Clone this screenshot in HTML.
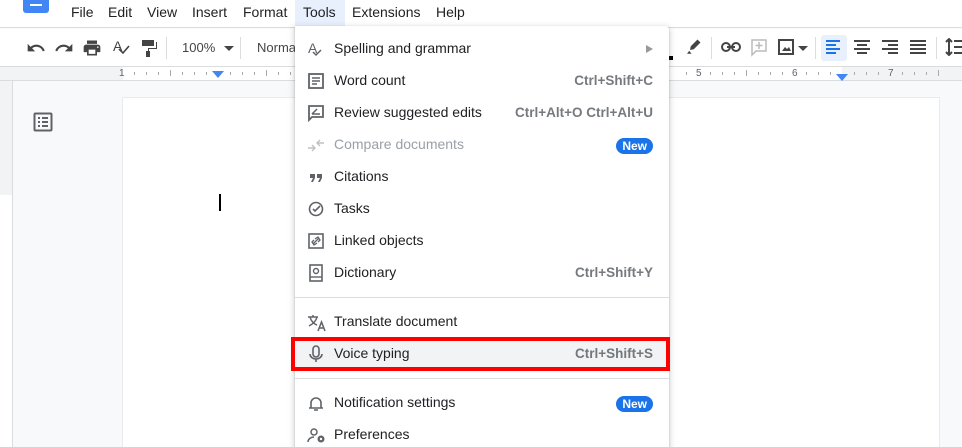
<!DOCTYPE html>
<html><head><style>
*{margin:0;padding:0;box-sizing:border-box}
html,body{width:962px;height:447px;overflow:hidden}
body{background:#f8f9fa;font-family:"Liberation Sans",Arial,sans-serif;position:relative;color:#3c4043}
.abs{position:absolute}
.menubar{left:0;top:0;width:962px;height:28px;background:#fff;border-bottom:1px solid #dadce0}
.mi{position:absolute;top:4px;font-size:14px;color:#202124}
.toolbar{left:0;top:29px;width:962px;height:38px;background:#fff;border-bottom:1px solid #dadce0}
.ruler{left:0;top:67px;width:962px;height:14px;background:#fff;border-bottom:1px solid #dadce0}
.page{left:123px;top:98px;width:816px;height:360px;background:#fff;box-shadow:0 0 0 1px #e8eaed}
.menu{left:295px;top:26px;width:374px;height:430px;background:#fff;border-radius:0 4px 4px 4px;box-shadow:0 2px 6px 2px rgba(60,64,67,.15),0 1px 2px rgba(60,64,67,.3)}
.it{position:absolute;left:0;width:374px;height:32px;font-size:14px;color:#202124}
.it .t{position:absolute;left:39px;top:8px}
.it .k{position:absolute;right:16px;top:9px;color:#5f6368;font-size:13.5px;font-weight:bold;opacity:.85}
.it svg{position:absolute;left:12px;top:8px}
.new{position:absolute;right:16px;top:10px;background:#1a73e8;color:#fff;font-size:12px;font-weight:bold;border-radius:8px;padding:1px 6px;height:16px;line-height:14px}
.div{position:absolute;left:0;width:374px;height:1px;background:#dadce0}
.ti{position:absolute;top:9px}
.tk{position:absolute;top:5px;width:1px;height:3px;background:#aaa}
</style></head><body>
<div class="abs menubar">
 <div class="abs" style="left:23px;top:-4px;width:26px;height:17px;background:#4285f4;border-radius:3px"><div style="position:absolute;left:7px;top:8px;width:12px;height:2px;background:#fff"></div></div>
 <span class="mi" style="left:71px">File</span>
 <span class="mi" style="left:108px">Edit</span>
 <span class="mi" style="left:147px">View</span>
 <span class="mi" style="left:192px">Insert</span>
 <span class="mi" style="left:243px">Format</span>
 <div class="abs" style="left:295px;top:0;width:50px;height:26px;background:#e8f0fe"></div>
 <span class="mi" style="left:303px">Tools</span>
 <span class="mi" style="left:352px">Extensions</span>
 <span class="mi" style="left:436px">Help</span>
</div>
<div class="abs toolbar">
 <svg class="ti" style="left:26px" width="20" height="20" viewBox="0 0 24 24"><path d="M12.5 8c-2.65 0-5.05 1-6.9 2.6L2 7v9h9l-3.620-3.62c1.39-1.16 3.16-1.88 5.12-1.88 3.54 0 6.55 2.31 7.6 5.5l2.37-.78C21.08 11.03 17.15 8 12.5 8z" fill="#444"/></svg>
 <svg class="ti" style="left:54px" width="20" height="20" viewBox="0 0 24 24"><path d="M18.4 10.6C16.55 9 14.15 8 11.5 8c-4.65 0-8.58 3.03-9.960 7.22L3.9 16c1.05-3.19 4.05-5.5 7.6-5.5 1.95 0 3.73.72 5.12 1.88L13 16h9V7l-3.6 3.6z" fill="#444"/></svg>
 <svg class="ti" style="left:82px" width="20" height="20" viewBox="0 0 24 24"><path d="M19 8H5c-1.66 0-3 1.34-3 3v6h4v4h12v-4h4v-6c0-1.66-1.34-3-3-3zm-3 11H8v-5h8v5zm3-7c-.55 0-1-.45-1-1s.45-1 1-1 1 .45 1 1-.45 1-1 1zm-1-9H6v4h12V3z" fill="#444"/></svg>
 <span class="abs" style="left:113px;top:9px;font-size:14px;color:#444">A</span><svg class="abs" style="left:117px;top:16px" width="14" height="10"><path d="M2 4l4 4 6-7" stroke="#444" stroke-width="1.6" fill="none"/></svg>
 <svg class="ti" style="left:140px" width="18" height="20" viewBox="0 0 18 20"><path d="M2 2h12v6H2zM14 4h2v6H8v3H6v6h4v-6H9V11h8V4" fill="#444"/></svg>
 <div class="abs" style="left:166px;top:8px;width:1px;height:22px;background:#dadce0"></div>
 <span class="abs" style="left:182px;top:11px;font-size:13px;color:#444">100%</span>
 <div class="abs" style="left:224px;top:17px;border:5px solid transparent;border-top-color:#444;border-bottom:0"></div>
 <div class="abs" style="left:240px;top:8px;width:1px;height:22px;background:#dadce0"></div>
 <span class="abs" style="left:257px;top:11px;font-size:13px;color:#444">Normal</span>
 <div class="abs" style="left:669px;top:27px;width:4px;height:4px;background:#000"></div>
 <svg class="ti" style="left:684px" width="18" height="18" viewBox="0 0 24 24"><path d="M18 2l4 4-9 9-5 1 1-5z M7 17l-3 4h6" fill="#444"/></svg>
 <div class="abs" style="left:711px;top:8px;width:1px;height:22px;background:#dadce0"></div>
 <svg class="ti" style="left:720px;top:10px" width="22" height="16" viewBox="0 0 22 16"><rect x="2" y="4" width="8" height="8" rx="4" fill="none" stroke="#444" stroke-width="2"/><rect x="12" y="4" width="8" height="8" rx="4" fill="none" stroke="#444" stroke-width="2"/><path d="M7 8h8" stroke="#444" stroke-width="2"/></svg>
 <svg class="ti" style="left:750px" width="18" height="20" viewBox="0 0 18 20"><path d="M2 2h14v11H6l-4 4z" fill="none" stroke="#bbb" stroke-width="1.5"/><path d="M9 4v7M5.5 7.5h7" stroke="#bbb" stroke-width="1.5"/></svg>
 <svg class="ti" style="left:777px" width="18" height="18" viewBox="0 0 18 18"><rect x="2" y="2" width="14" height="14" fill="none" stroke="#444" stroke-width="2"/><path d="M5 13l3-4 2 2 2-2 2 4z" fill="#444"/></svg>
 <div class="abs" style="left:798px;top:17px;border:5px solid transparent;border-top-color:#444;border-bottom:0"></div>
 <div class="abs" style="left:815px;top:8px;width:1px;height:22px;background:#dadce0"></div>
 <div class="abs" style="left:821px;top:6px;width:26px;height:26px;background:#e8f0fe;border-radius:3px"></div>
 <svg class="ti" style="left:825px" width="18" height="18"><path d="M1 3h14M1 7h10M1 11h14M1 15h10" stroke="#1a73e8" stroke-width="2"/></svg>
 <svg class="ti" style="left:853px" width="18" height="18"><path d="M1 3h16M4 7h10M1 11h16M4 15h10" stroke="#444" stroke-width="2"/></svg>
 <svg class="ti" style="left:881px" width="18" height="18"><path d="M1 3h16M7 7h10M1 11h16M7 15h10" stroke="#444" stroke-width="2"/></svg>
 <svg class="ti" style="left:909px" width="18" height="18"><path d="M1 3h16M1 7h16M1 11h16M1 15h16" stroke="#444" stroke-width="2"/></svg>
 <div class="abs" style="left:936px;top:8px;width:1px;height:22px;background:#dadce0"></div>
 <svg class="ti" style="left:945px" width="17" height="18"><path d="M4 1v16M1 4l3-3 3 3M1 14l3 3 3-3M9 3h8M9 9h8M9 15h8" stroke="#444" stroke-width="2" fill="none"/></svg>
</div>
<div class="abs ruler">
 <div class="abs" style="left:0;top:0;width:123px;height:13px;background:#f1f3f4"></div>
 <div class="abs" style="left:842px;top:0;width:120px;height:13px;background:#f1f3f4"></div>
 <span class="abs" style="left:119px;top:1px;font-size:10px;color:#5f6368">1</span>
 <div class="tk" style="left:134px"></div><div class="tk" style="left:146px"></div><div class="tk" style="left:158px"></div><div class="tk" style="left:170px;top:3px;height:6px"></div><div class="tk" style="left:182px"></div><div class="tk" style="left:194px"></div><div class="tk" style="left:206px"></div><div class="tk" style="left:230px"></div><div class="tk" style="left:242px"></div><div class="tk" style="left:254px"></div><div class="tk" style="left:266px;top:3px;height:6px"></div><div class="tk" style="left:278px"></div><div class="tk" style="left:290px"></div>
 <span class="abs" style="left:696px;top:1px;font-size:10px;color:#5f6368">5</span>
 <div class="tk" style="left:686px"></div><div class="tk" style="left:710px"></div><div class="tk" style="left:722px"></div><div class="tk" style="left:734px"></div><div class="tk" style="left:746px;top:3px;height:6px"></div><div class="tk" style="left:758px"></div><div class="tk" style="left:770px"></div><div class="tk" style="left:782px"></div>
 <span class="abs" style="left:792px;top:1px;font-size:10px;color:#5f6368">6</span>
 <div class="tk" style="left:806px"></div><div class="tk" style="left:818px"></div><div class="tk" style="left:830px"></div><div class="tk" style="left:854px"></div><div class="tk" style="left:866px"></div><div class="tk" style="left:878px"></div><div class="tk" style="left:902px"></div><div class="tk" style="left:914px"></div><div class="tk" style="left:926px"></div><div class="tk" style="left:938px;top:3px;height:6px"></div>
 <span class="abs" style="left:888px;top:1px;font-size:10px;color:#5f6368">7</span>
 <div class="abs" style="left:212px;top:4px;border:6px solid transparent;border-top:7px solid #4285f4;border-bottom:0"></div>
 <div class="abs" style="left:836px;top:7px;border:6px solid transparent;border-top:7px solid #4285f4;border-bottom:0"></div>
</div>
<div class="abs" style="left:0;top:81px;width:13px;height:366px;background:#fff;border-right:1px solid #dadce0"></div>
<div class="abs" style="left:0;top:81px;width:13px;height:114px;background:#f1f3f4;border-right:1px solid #dadce0"></div>
<svg class="abs" style="left:33px;top:112px" width="20" height="20"><rect x="1.5" y="1.5" width="17" height="17" rx="1" fill="none" stroke="#5f6368" stroke-width="2"/><path d="M5 6h2M9 6h6M5 10h2M9 10h6M5 14h2M9 14h6" stroke="#5f6368" stroke-width="2"/></svg>
<div class="abs page"></div>
<div class="abs" style="left:219px;top:194px;width:2px;height:17px;background:#000"></div>
<div class="abs menu">
 <div class="it" style="top:6px"><span class="abs" style="left:13px;top:8px;font-size:14px;color:#5f6368">A</span><svg style="left:17px;top:17px" width="12" height="8"><path d="M1 3l3 3 5-5" stroke="#5f6368" stroke-width="1.5" fill="none"/></svg><span class="t">Spelling and grammar</span><div class="abs" style="right:16px;top:13px;border:4px solid transparent;border-left:7px solid #999;border-right:0"></div></div>
 <div class="it" style="top:38px"><svg width="18" height="18"><rect x="2" y="2" width="14" height="14" fill="none" stroke="#5f6368" stroke-width="1.8"/><path d="M5 6h8M5 9h8M5 12h5" stroke="#5f6368" stroke-width="1.5"/></svg><span class="t">Word count</span><span class="k">Ctrl+Shift+C</span></div>
 <div class="it" style="top:70px"><svg width="18" height="18"><path d="M2 2h14v11H5l-3 3z" fill="none" stroke="#5f6368" stroke-width="1.8"/><path d="M5 10l5-5M5 10h8" stroke="#5f6368" stroke-width="1.5"/></svg><span class="t">Review suggested edits</span><span class="k">Ctrl+Alt+O Ctrl+Alt+U</span></div>
 <div class="it" style="top:102px;color:#9aa0a6"><svg width="18" height="18"><path d="M1 12h7M5 9l3 3-3 3M17 7h-7M13 4l-3 3 3 3" stroke="#bdc1c6" stroke-width="1.4" fill="none"/></svg><span class="t">Compare documents</span><span class="new">New</span></div>
 <div class="it" style="top:134px"><svg width="18" height="18"><path d="M3 6h5v4l-2 4H4l2-4H3zM10 6h5v4l-2 4h-2l2-4h-3z" fill="#5f6368"/></svg><span class="t">Citations</span></div>
 <div class="it" style="top:166px"><svg width="18" height="18"><circle cx="9" cy="9" r="6.5" fill="none" stroke="#5f6368" stroke-width="1.6"/><path d="M6 9l2 2 5-5" stroke="#5f6368" stroke-width="1.6" fill="none"/></svg><span class="t">Tasks</span></div>
 <div class="it" style="top:198px"><svg width="18" height="18"><rect x="2" y="2" width="14" height="14" fill="none" stroke="#5f6368" stroke-width="1.6"/><path d="M6 12l6-6M7 8l-2 2 2 3 3-2M11 10l2-2-2-3-3 2" stroke="#5f6368" stroke-width="1.3" fill="none"/></svg><span class="t">Linked objects</span></div>
 <div class="it" style="top:230px"><svg width="18" height="18"><rect x="3" y="1" width="12" height="16" fill="none" stroke="#5f6368" stroke-width="1.6"/><circle cx="9" cy="7" r="2.5" fill="none" stroke="#5f6368" stroke-width="1.4"/><path d="M3 13h12" stroke="#5f6368" stroke-width="1.4"/></svg><span class="t">Dictionary</span><span class="k">Ctrl+Shift+Y</span></div>
 <div class="div" style="top:271px"></div>
 <div class="it" style="top:279px"><svg width="20" height="20"><path d="M1 4h10M6 2v2M3 4c1 4 4 7 7 8M10 4c-1 4-4 7-8 9" stroke="#5f6368" stroke-width="1.5" fill="none"/><path d="M11 18l3.5-9 3.5 9M12 15h5" stroke="#5f6368" stroke-width="1.5" fill="none"/></svg><span class="t">Translate document</span></div>
 <div class="it" style="top:311px;background:#f1f3f4"><svg width="18" height="18"><rect x="6" y="1" width="6" height="11" rx="3" fill="none" stroke="#5f6368" stroke-width="1.6"/><path d="M3 9c0 3 3 5 6 5s6-2 6-5M9 14v3" stroke="#5f6368" stroke-width="1.6" fill="none"/></svg><span class="t">Voice typing</span><span class="k">Ctrl+Shift+S</span></div>
 <div class="div" style="top:352px"></div>
 <div class="it" style="top:360px"><svg width="18" height="18"><path d="M4 14V9a5 5 0 0110 0v5h2M2 14h14M7 16h4" stroke="#5f6368" stroke-width="1.6" fill="none"/></svg><span class="t">Notification settings</span><span class="new">New</span></div>
 <div class="it" style="top:392px"><svg width="20" height="18"><circle cx="7" cy="6" r="3" fill="none" stroke="#5f6368" stroke-width="1.5"/><path d="M1 16c0-3 3-5 6-5" stroke="#5f6368" stroke-width="1.5" fill="none"/><circle cx="14" cy="13" r="3.5" fill="#5f6368"/><circle cx="14" cy="13" r="1.2" fill="#fff"/></svg><span class="t">Preferences</span></div>
</div>
<div class="abs" style="left:291px;top:337px;width:379px;height:34px;border:4px solid #f00"></div>
</body></html>
